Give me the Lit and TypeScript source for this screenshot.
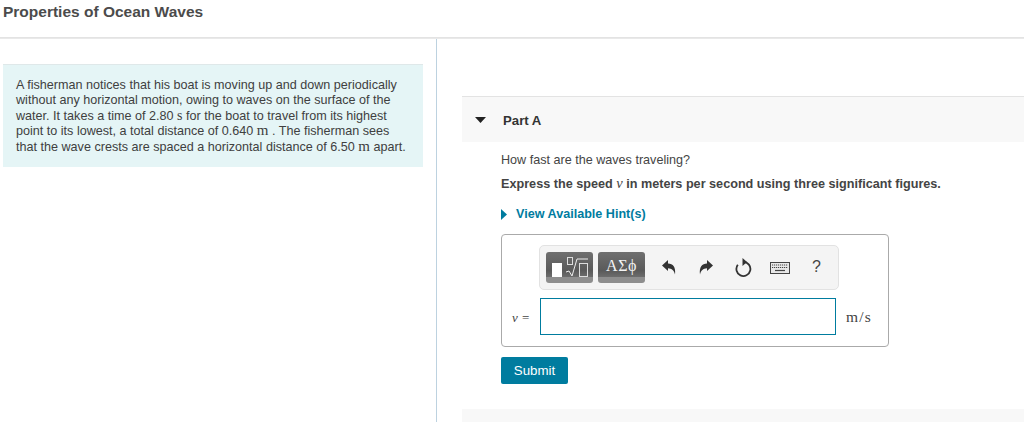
import { LitElement, html, css } from "lit";
import { customElement } from "lit/decorators.js";

@customElement("app-root")
export class AppRoot extends LitElement {
  static styles = css`
    :host { display: block; width: 1024px; height: 422px; overflow: hidden; background: #fff; font-family: "Liberation Sans", Arial, sans-serif; color: #333; font-size: 13px; }
    .title { height: 38px; box-sizing: border-box; border-bottom: 1px solid #e3e3e3; padding: 3px 0 0 3px; font-size: 15.5px; line-height: 18px; font-weight: 700; color: #4b4b4b; }
    .main { display: flex; height: 383px; border-top: 1px solid #e9e9e9; }
    .left { width: 437px; box-sizing: border-box; border-right: 1px solid #bdd2e0; padding: 25px 13px 0 3px; flex: none; height: 100%; }
    .info { background: #e5f5f6; border-top: 1px solid #dfe8e9; padding: 13px 12px 13px 13px; line-height: 15.4px; font-size: 12.6px; height: 103px; box-sizing: border-box; color: #404040; }
    .m { font-family: "Liberation Serif", serif; font-size: 15px; line-height: 0; }
    .s { font-family: "Liberation Serif", serif; font-size: 14px; line-height: 0; }
    .right { flex: 1; padding: 57px 0 0 25px; min-width: 0; }
    .part { height: 46px; box-sizing: border-box; background: #f8f8f8; border-top: 1px solid #e3e3e3; display: flex; align-items: center; font-weight: 700; font-size: 13.2px; color: #333; padding: 1px 0 0 13px; }
    .part svg { margin-right: 17px; }
    .body { padding: 10px 0 0 39px; }
    .q { line-height: 16px; font-size: 12.6px; color: #444; }
    .e { line-height: 16px; margin-top: 8px; font-weight: 700; font-size: 12.65px; color: #444; }
    .e i { font-family: "Liberation Serif", serif; font-weight: 400; font-size: 14.5px; line-height: 0; }
    .hint { display: flex; align-items: center; margin-top: 14px; line-height: 16px; font-weight: 700; font-size: 12.6px; color: #007c9f; }
    .hint svg { margin-right: 9px; }
    .box { margin-top: 12px; width: 388px; height: 113px; box-sizing: border-box; border: 1px solid #aaa; border-radius: 4px; padding: 10px 0 0 37px; }
    .tools { width: 300px; height: 45px; box-sizing: border-box; background: #f4f4f4; border: 1px solid #e2e2e2; border-radius: 5px; display: flex; align-items: center; padding-left: 6px; }
    .btn { height: 31px; width: 47px; box-sizing: border-box; border-radius: 3px; background: linear-gradient(#6f6f6f 0, #5a5a5a 60%, #6c6c6c 80%, #8e8e8e 81%, #8e8e8e 100%); color: #fff; display: flex; align-items: center; justify-content: center; }
    .btn + .btn { margin-left: 5px; }
    .greek { font-family: "Liberation Serif", serif; font-size: 16px; letter-spacing: 0.5px; padding-bottom: 4px; box-sizing: border-box; color: #f4f4f4; }
    .ic { display: flex; align-items: center; justify-content: center; width: 37px; height: 31px; color: #333; }
    .first { margin-left: 5px; }
    .qm { font-size: 16px; color: #444; padding-bottom: 2px; box-sizing: border-box; }
    .ans { display: flex; align-items: center; margin-top: 8px; margin-left: -37px; }
    .var { width: 38px; box-sizing: border-box; padding: 2px 0 0 10px; font-family: "Liberation Serif", serif; font-size: 13px; color: #444; word-spacing: 1px; }
    .input { width: 296px; height: 37px; box-sizing: border-box; border: 1px solid #007c9f; background: #fff; }
    .unit { margin-left: 10px; font-family: "Liberation Serif", serif; font-size: 15.5px; color: #444; letter-spacing: 1.2px; }
    .submit { margin-top: 10px; width: 67px; height: 27px; border: 0; border-radius: 2px; background: #007c9f; color: #fff; font: 13.3px "Liberation Sans", Arial, sans-serif; padding: 0; display: block; }
    .next { margin-top: 25px; height: 20px; background: #f8f8f8; margin-left: -39px; }
  `;

  render() {
    return html`
      <div class="title">Properties of Ocean Waves</div>
      <div class="main">
        <div class="left">
          <div class="info">
            A fisherman notices that his boat is moving up and down periodically<br>
            without any horizontal motion, owing to waves on the surface of the<br>
            water. It takes a time of 2.80 <span class="s">s</span> for the boat to travel from its highest<br>
            point to its lowest, a total distance of 0.640 <span class="m">m</span> . The fisherman sees<br>
            that the wave crests are spaced a horizontal distance of 6.50 <span class="m">m</span> apart.
          </div>
        </div>
        <div class="right">
          <div class="part">
            <svg width="11" height="6" viewBox="0 0 11 6"><path d="M0 0h11L5.5 6z" fill="#222"/></svg>
            Part A
          </div>
          <div class="body">
            <div class="q">How fast are the waves traveling?</div>
            <div class="e">Express the speed <i>v</i> in meters per second using three significant figures.</div>
            <div class="hint">
              <svg width="6" height="11" viewBox="0 0 6 11"><path d="M0 0l6 5.5L0 11z" fill="#007c9f"/></svg>
              View Available Hint(s)
            </div>
            <div class="box">
              <div class="tools">
                <div class="btn">
                  <svg width="47" height="31" viewBox="0 0 47 31">
                    <rect x="6" y="11" width="10" height="14" fill="#fff"/>
                    <rect x="21.500" y="5.500" width="5" height="7" fill="none" stroke="#ddd"/>
                    <path d="M20 20l3-1 3 5 5-17h11" fill="none" stroke="#eee"/>
                    <rect x="33.500" y="11.500" width="8" height="13" fill="none" stroke="#ddd"/>
                  </svg>
                </div>
                <div class="btn greek">ΑΣϕ</div>
                <div class="ic first">
                  <svg width="14" height="15" viewBox="0 0 14 15"><path d="M0 5.500L6 0v3.400c5 .2 8 3.600 7 11-1-3.900-3-6-7-6.100V11z" fill="#333"/></svg>
                </div>
                <div class="ic">
                  <svg width="14" height="15" viewBox="0 0 14 15"><path d="M14 5.500L8 0v3.400c-5 .2-8 3.600-7 11 1-3.900 3-6 7-6.100V11z" fill="#333"/></svg>
                </div>
                <div class="ic">
                  <svg width="18" height="19" viewBox="0 0 18 19"><path d="M9.500 4A7 7 0 1 1 3.800 6.800" fill="none" stroke="#333" stroke-width="1.800"/><path d="M8.500 0v8l4.500-4z" fill="#333"/></svg>
                </div>
                <div class="ic">
                  <svg width="20" height="12" viewBox="0 0 20 12"><rect x="0.500" y="0.500" width="19" height="11" fill="#e8e8e8" stroke="#444"/><path d="M2 3h16M2 5.500h16" stroke="#444" stroke-dasharray="1.200 .8"/><path d="M5 8.500h10" stroke="#444" stroke-width="1.200"/></svg>
                </div>
                <div class="ic qm">?</div>
              </div>
              <div class="ans">
                <div class="var"><i>v</i> =</div>
                <div class="input"></div>
                <div class="unit">m/s</div>
              </div>
            </div>
            <button class="submit">Submit</button>
            <div class="next"></div>
          </div>
        </div>
      </div>
    `;
  }
}
